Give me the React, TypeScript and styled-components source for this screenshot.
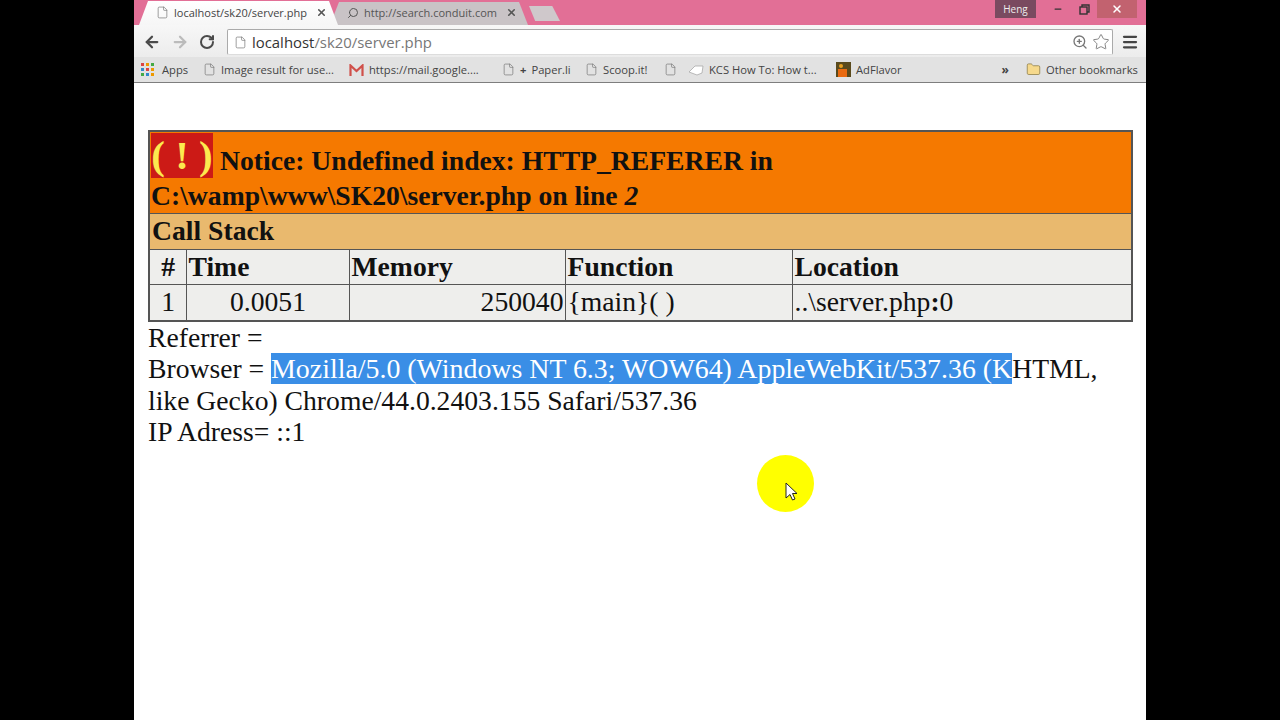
import React from "react";
import styled, { createGlobalStyle } from "styled-components";
import { ArrowLeft, ArrowRight, RotateCw, File, Search, ZoomIn, Star, Menu, X, Minus, Folder } from "lucide-react";

const Global = createGlobalStyle`
  html, body { margin: 0; padding: 0; background: #000; height: 100%; overflow: hidden; }
  #root { height: 720px; }
`;

const Screen = styled.div`
  position: relative;
  width: 1012px;
  height: 720px;
  margin: 0 auto;
  background: #fff;
  display: flex;
  flex-direction: column;
  font-family: "Open Sans", "Liberation Sans", sans-serif;
  overflow: hidden;
`;

const TabStrip = styled.div`
  height: 25px;
  flex: none;
  background: #e26f96;
  display: flex;
  align-items: flex-end;
  padding-left: 5px;
`;

const Tab = styled.div<{ $active?: boolean }>`
  width: ${(p) => (p.$active ? 199 : 198)}px;
  margin-right: ${(p) => (p.$active ? -8 : 0)}px;
  height: ${(p) => (p.$active ? 24 : 23)}px;
  padding: 0 11px 2px 17px;
  box-sizing: border-box;
  display: flex;
  align-items: center;
  gap: 5px;
  background: ${(p) => (p.$active ? "linear-gradient(#fff, #f6f6f6)" : "#c9c3c6")};
  clip-path: polygon(0 100%, 9px 0, calc(100% - 9px) 0, 100% 100%);
  color: ${(p) => (p.$active ? "#444" : "#555")};
  font-size: 11px;
  position: relative;
  z-index: ${(p) => (p.$active ? 1 : 0)};
  white-space: nowrap;
  overflow: hidden;
`;

const TabTitle = styled.span`
  flex: 1;
  overflow: hidden;
`;

const NewTab = styled.div`
  width: 31px;
  height: 15px;
  margin: 0 0 4px 1px;
  background: #cfc8cb;
  clip-path: polygon(0 0, 75% 0, 100% 100%, 20% 100%);
`;

const WindowControls = styled.div`
  margin-left: auto;
  align-self: flex-start;
  display: flex;
  align-items: flex-start;
  color: #333;
`;

const Profile = styled.div`
  width: 41px;
  height: 18px;
  background: #7a4a60;
  color: #eee;
  font-size: 10px;
  display: flex;
  align-items: center;
  justify-content: center;
  margin-right: 9px;
`;

const WinButton = styled.div<{ $close?: boolean }>`
  width: ${(p) => (p.$close ? 40 : 26)}px;
  height: 18px;
  margin-right: ${(p) => (p.$close ? 9 : 0)}px;
  background: ${(p) => (p.$close ? "#c2626f" : "transparent")};
  color: ${(p) => (p.$close ? "#fff" : "#333")};
  display: flex;
  align-items: center;
  justify-content: center;
`;

const Toolbar = styled.div`
  height: 32px;
  flex: none;
  box-sizing: border-box;
  background: linear-gradient(#f7f7f7, #ececec);
  display: flex;
  align-items: center;
  padding: 2px 7px 0 9px;
  color: #555;
`;

const NavButton = styled.div<{ $dim?: boolean }>`
  width: 28px;
  display: flex;
  align-items: center;
  color: ${(p) => (p.$dim ? "#bbb" : "#4a4a4a")};
`;

const Omnibox = styled.div`
  width: 886px;
  height: 26px;
  box-sizing: border-box;
  background: #fff;
  border: 1px solid #aaa;
  border-bottom-color: #ddd;
  border-radius: 2px;
  display: flex;
  align-items: center;
  padding: 0 2px 0 6px;
  gap: 5px;
  font-size: 14.9px;
  color: #777;
`;

const Host = styled.span`
  color: #333;
`;

const OmniIcons = styled.div`
  margin-left: auto;
  display: flex;
  align-items: center;
  gap: 4px;
  color: #777;
`;

const MenuButton = styled.div`
  margin-left: auto;
  display: flex;
  color: #444;
`;

const BookmarkBar = styled.div`
  height: 26px;
  flex: none;
  box-sizing: border-box;
  background: #e2e2e2;
  border-bottom: 1px solid #7e7e7e;
  display: flex;
  align-items: center;
  padding: 0 7px 0 7px;
  font-size: 11.2px;
  color: #444;
  white-space: nowrap;
`;

const Bookmark = styled.div<{ $w: number }>`
  width: ${(p) => p.$w}px;
  flex: none;
  display: flex;
  align-items: center;
  gap: 5px;
`;

const Chevron = styled.div`
  margin-left: auto;
  margin-right: 17px;
  font-size: 12px;
  font-weight: 700;
`;

const AppsGrid = styled.div`
  width: 16px;
  display: grid;
  grid-template-columns: repeat(3, 3px);
  gap: 2px;
`;

const Dot = styled.i<{ $c: string }>`
  height: 3px;
  background: ${(p) => p.$c};
`;

const Page = styled.div`
  flex: 1;
  padding: 47px 14px 0;
  font-family: "Liberation Serif", "Times New Roman", serif;
  font-size: 27.65px;
  line-height: 31.6px;
  color: #111;
`;

const ErrorTable = styled.table`
  width: 983px;
  border-collapse: collapse;
  table-layout: fixed;
  border: 2px solid #555;
`;

const Cell = styled.td<{ $bg?: string; $align?: string }>`
  border: 1.5px solid #555;
  background: ${(p) => p.$bg ?? "#eeeeec"};
  text-align: ${(p) => p.$align ?? "left"};
  padding: 1px 1px 1.5px 2px;
  height: 32px;
  box-sizing: content-box;
  line-height: 32px;
  white-space: nowrap;
`;

const HeadCell = styled(Cell).attrs({ as: "th" })`
  font-weight: 700;
`;

const NoticeCell = styled(Cell)`
  background: #f57900;
  font-weight: 700;
  white-space: normal;
  line-height: 35px;
  padding: 1px 1px 0;
`;

const Bang = styled.span`
  display: inline-block;
  vertical-align: -8.500px;
  overflow: hidden;
  width: 62px;
  height: 45px;
  margin: 0 7px 0 0;
  background: #cc1a16;
  color: #fce94f;
  font-size: 41px;
  line-height: 45px;
  text-align: center;
  white-space: pre;
`;

const Selected = styled.span`
  background: #3a8ee6;
  color: #fff;
  font-size: 27.88px;
`;

const Spotlight = styled.div`
  position: absolute;
  left: 623px;
  top: 455px;
  width: 57px;
  height: 57px;
  border-radius: 50%;
  background: #ffff00;
  display: flex;
  align-items: center;
  justify-content: center;
`;

const CursorMark = styled.svg`
  margin: 16px 0 0 11px;
`;

const PageIcon = () => <File size={13} strokeWidth={1.3} color="#777" />;

const apps = ["#d44", "#e90", "#4a4", "#38c", "#d44", "#e90", "#4a4", "#38c", "#e90"];

export default function App() {
  return (
    <Screen>
      <Global />
      <TabStrip>
        <Tab $active>
          <PageIcon />
          <TabTitle>localhost/sk20/server.php</TabTitle>
          <X size={11} strokeWidth={3.500} color="#555" />
        </Tab>
        <Tab>
          <Search size={12} strokeWidth={2} style={{ transform: "scaleX(-1)" }} />
          <TabTitle>http://search.conduit.com</TabTitle>
          <X size={11} strokeWidth={3.500} color="#555" />
        </Tab>
        <NewTab />
        <WindowControls>
          <Profile>Heng</Profile>
          <WinButton><Minus size={10} strokeWidth={3} /></WinButton>
          <WinButton>
            <svg width="11" height="11" viewBox="0 0 11 11" fill="none" stroke="#333" strokeWidth="1.4">
              <rect x="1" y="3" width="7" height="7" />
              <path d="M3 3V1h7v7H8" />
            </svg>
          </WinButton>
          <WinButton $close><X size={12} strokeWidth={3} /></WinButton>
        </WindowControls>
      </TabStrip>
      <Toolbar>
        <NavButton><ArrowLeft size={18} strokeWidth={3} /></NavButton>
        <NavButton $dim><ArrowRight size={18} strokeWidth={3} /></NavButton>
        <NavButton><RotateCw size={16} strokeWidth={3} /></NavButton>
        <Omnibox>
          <PageIcon />
          <span><Host>localhost</Host>/sk20/server.php</span>
          <OmniIcons>
            <ZoomIn size={16} strokeWidth={2} />
            <Star size={18} strokeWidth={1.2} />
          </OmniIcons>
        </Omnibox>
        <MenuButton><Menu size={18} strokeWidth={3} /></MenuButton>
      </Toolbar>
      <BookmarkBar>
        <Bookmark $w={62}>
          <AppsGrid>{apps.map((c, i) => <Dot key={i} $c={c} />)}</AppsGrid>
          Apps
        </Bookmark>
        <Bookmark $w={146}><PageIcon />Image result for use...</Bookmark>
        <Bookmark $w={153}>
          <svg width="15" height="12" viewBox="0 0 15 12" fill="none" stroke="#d0504a" strokeWidth="2.2">
            <path d="M1.5 12V1.500L7.500 7l6-5.500V12" />
          </svg>
          https://mail.google....
        </Bookmark>
        <Bookmark $w={83}><PageIcon /><b>+</b>Paper.li</Bookmark>
        <Bookmark $w={79}><PageIcon />Scoop.it!</Bookmark>
        <Bookmark $w={24}><PageIcon /></Bookmark>
        <Bookmark $w={148}>
          <svg width="16" height="12" viewBox="0 0 16 12">
            <path d="M1 8l6-6h8l-1 7-5 2z" fill="#fff" stroke="#aaa" strokeWidth="0.8" />
          </svg>
          KCS How To: How t...
        </Bookmark>
        <Bookmark $w={100}>
          <svg width="15" height="15" viewBox="0 0 15 15">
            <rect width="15" height="15" fill="#5a4a1c" />
            <rect x="2" y="7" width="9" height="8" fill="#ea6a10" />
            <circle cx="5" cy="4" r="2" fill="#e8a020" />
          </svg>
          AdFlavor
        </Bookmark>
        <Chevron>»</Chevron>
        <Bookmark $w={113}>
          <Folder size={15} strokeWidth={1.2} color="#8a7a44" fill="#f6d98c" />
          Other bookmarks
        </Bookmark>
      </BookmarkBar>
      <Page>
        <ErrorTable>
          <colgroup>
            <col style={{ width: 37 }} />
            <col style={{ width: 163 }} />
            <col style={{ width: 216 }} />
            <col style={{ width: 227 }} />
            <col style={{ width: 340 }} />
          </colgroup>
          <tbody>
            <tr>
              <NoticeCell colSpan={5}>
                <Bang>( ! )</Bang>
                Notice: Undefined index: HTTP_REFERER in C:\wamp\www\SK20\server.php on line <i>2</i>
              </NoticeCell>
            </tr>
            <tr>
              <HeadCell colSpan={5} $bg="#e9b96e">Call Stack</HeadCell>
            </tr>
            <tr>
              <HeadCell $align="center">#</HeadCell>
              <HeadCell>Time</HeadCell>
              <HeadCell>Memory</HeadCell>
              <HeadCell>Function</HeadCell>
              <HeadCell>Location</HeadCell>
            </tr>
            <tr>
              <Cell $align="center">1</Cell>
              <Cell $align="center">0.0051</Cell>
              <Cell $align="right">250040</Cell>
              <Cell>{"{main}( )"}</Cell>
              <Cell>..\server.php<b>:</b>0</Cell>
            </tr>
          </tbody>
        </ErrorTable>
        Referrer =<br />
        Browser = <Selected>Mozilla/5.0 (Windows NT 6.3; WOW64) AppleWebKit/537.36 (K</Selected>HTML, like Gecko) Chrome/44.0.2403.155 Safari/537.36<br />
        IP Adress= ::1
      </Page>
      <Spotlight>
        <CursorMark width="13" height="20" viewBox="0 0 13 20">
          <path d="M1 1v15l4-3.500L7.500 18l2.500-1-2.500-5.500H12z" fill="#fff" stroke="#222" strokeWidth="1" />
        </CursorMark>
      </Spotlight>
    </Screen>
  );
}
